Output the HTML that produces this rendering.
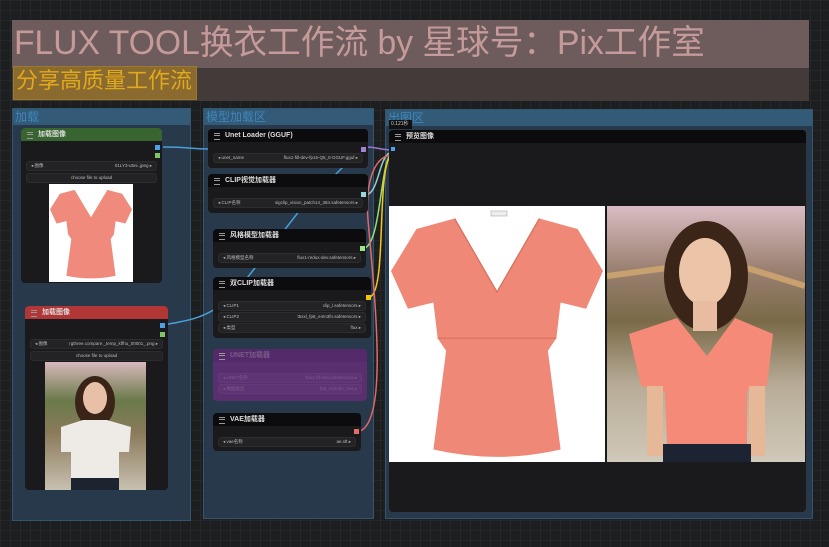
<!DOCTYPE html>
<html><head><meta charset="utf-8"><style>
*{margin:0;padding:0;box-sizing:border-box}
body{width:829px;height:547px;overflow:hidden;background:#1d1e20;font-family:"Liberation Sans","Noto Sans CJK SC",sans-serif;position:relative;
background-image:linear-gradient(#26272a 1px,transparent 1px),linear-gradient(90deg,#26272a 1px,transparent 1px);background-size:10px 10px}
.a{position:absolute}
.grp{position:absolute;background:#27394a;border:1px solid #33556e}
.grp .h{height:16px;background:#335a76;color:#3f87bd;font-size:12px;line-height:16px;padding-left:2px}
.node{position:absolute;background:#1a1a1c;border-radius:4px;overflow:hidden}
.node .t{height:13px;background:#0c0c0e;color:#ddd;font-size:7px;line-height:13px;padding-left:17px;position:relative;font-weight:bold}
.node .t:before{content:"";position:absolute;left:6px;top:4px;width:6px;height:5px;border-top:1px solid #999;border-bottom:1px solid #999}
.node .t:after{content:"";position:absolute;left:6px;top:6px;width:6px;height:1px;background:#999}
.w{position:absolute;height:10px;background:#232325;border:1px solid #2d2d30;border-radius:3px;font-size:4.5px;color:#bbb;line-height:8px;padding:0 4px}
.w span{float:right}
.dot{position:absolute;width:5px;height:5px}
</style></head><body>
<!-- title -->
<div class="a" style="left:12px;top:20px;width:797px;height:48px;background:#6e5c5c"></div>
<div class="a" style="left:12px;top:68px;width:797px;height:33px;background:#433a3a"></div>
<div class="a" style="left:14px;top:21px;font-size:34px;color:#c59a9a;line-height:44px;white-space:nowrap;transform:scaleX(0.99);transform-origin:left">FLUX TOOL换衣工作流 by 星球号：Pix工作室</div>
<div class="a" style="left:13px;top:66px;width:184px;height:34px;background:#8a6a2e;border:1px solid #9c7a2c"></div>
<div class="a" style="left:16px;top:66px;font-size:22px;color:#e0a91e;line-height:30px;white-space:nowrap">分享高质量工作流</div>

<!-- groups -->
<div class="grp" style="left:12px;top:108px;width:179px;height:413px"><div class="h">加载</div></div>
<div class="grp" style="left:203px;top:108px;width:171px;height:411px"><div class="h">模型加载区</div></div>
<div class="grp" style="left:385px;top:109px;width:428px;height:410px"><div class="h">出图区</div></div>

<!-- wires -->
<svg class="a" style="left:0;top:0" width="829" height="547">
<g fill="none" stroke-width="1.5">
<path d="M163,147 C190,147 190,149 208,149" stroke="#4a9fd8"/>
<path d="M163,325 C190,320 200,320 230,300 L300,210 L350,160" stroke="#4a9fd8"/>
<path d="M365,147 C378,147 380,150 393,150" stroke="#9a78d0"/>
<path d="M365,195 C380,195 378,152 393,152" stroke="#8fd0d0"/>
<path d="M365,248 C382,240 380,155 393,153" stroke="#8ee07a"/>
<path d="M370,297 C388,290 375,160 393,154" stroke="#f0c820"/>
<path d="M360,431 C388,420 375,300 368,220 C365,180 375,155 393,155" stroke="#e06a6a"/>
</g></svg>

<!-- load image 1 -->
<div class="node" style="left:21px;top:128px;width:141px;height:155px">
<div class="t" style="background:#37642f">加载图像</div>
<div class="w" style="left:5px;top:33px;width:131px">◂ 图像<span>01LY3-u5ni..jpeg ▸</span></div>
<div class="w" style="left:5px;top:45px;width:131px;text-align:center">choose file to upload</div>
<svg class="a" style="left:28px;top:56px" width="84" height="98"><rect width="84" height="98" fill="#fff"/><g transform="translate(1,2) scale(0.82,0.78)"><path d="M30,5 L50,40 L70,5 L88,10 L100,30 L92,48 L80,45 L78,62 L74,68 L80,115 Q50,122 20,115 L26,68 L22,62 L20,45 L8,48 L0,30 L12,10 Z" fill="#f08a7c"/></g></svg>
</div>
<div class="dot" style="left:155px;top:145px;background:#4aa3e8"></div>
<div class="dot" style="left:155px;top:153px;background:#7ec66a"></div>

<!-- load image 2 -->
<div class="node" style="left:25px;top:306px;width:143px;height:184px">
<div class="t" style="background:#b13636">加载图像</div>
<div class="w" style="left:5px;top:33px;width:133px">◂ 图像<span>rgthree.compare._temp_kffhu_00001_.png ▸</span></div>
<div class="w" style="left:5px;top:45px;width:133px;text-align:center">choose file to upload</div>
<svg class="a" style="left:20px;top:56px" width="101" height="128"><defs><linearGradient id="g1" x1="0" y1="0" x2="0" y2="1"><stop offset="0" stop-color="#d8b8bc"/><stop offset=".3" stop-color="#6a7a4a"/><stop offset=".55" stop-color="#8a7a5a"/><stop offset="1" stop-color="#c8c0b0"/></linearGradient></defs>
<rect width="101" height="128" fill="url(#g1)"/><ellipse cx="50" cy="40" rx="20" ry="26" fill="#3a2418"/><ellipse cx="50" cy="36" rx="12" ry="16" fill="#e8c0a8"/><path d="M16,65 L38,58 L62,58 L86,65 L84,90 L74,90 L74,118 L26,118 L26,90 L16,90 Z" fill="#eeeae6"/><rect x="26" y="116" width="48" height="12" fill="#1c2430"/></svg>
</div>
<div class="dot" style="left:160px;top:323px;background:#4aa3e8"></div>
<div class="dot" style="left:160px;top:332px;background:#7ec66a"></div>

<!-- model nodes -->
<div class="node" style="left:208px;top:129px;width:160px;height:39px"><div class="t">Unet Loader (GGUF)</div>
<div class="w" style="left:5px;top:24px;width:150px">◂ unet_name<span>flux1-fill-dev-fp16-Q5_0-GGUF.gguf ▸</span></div></div>
<div class="dot" style="left:361px;top:147px;background:#a080d8"></div>
<div class="node" style="left:208px;top:174px;width:160px;height:39px"><div class="t">CLIP视觉加载器</div>
<div class="w" style="left:5px;top:24px;width:150px">◂ CLIP名称<span>sigclip_vision_patch14_384.safetensors ▸</span></div></div>
<div class="dot" style="left:361px;top:192px;background:#9ad8d8"></div>
<div class="node" style="left:213px;top:229px;width:153px;height:39px"><div class="t">风格模型加载器</div>
<div class="w" style="left:5px;top:24px;width:143px">◂ 风格模型名称<span>flux1-redux-dev.safetensors ▸</span></div></div>
<div class="dot" style="left:360px;top:246px;background:#9ae884"></div>
<div class="node" style="left:213px;top:277px;width:158px;height:61px"><div class="t">双CLIP加载器</div>
<div class="w" style="left:5px;top:24px;width:148px">◂ CLIP1<span>clip_l.safetensors ▸</span></div>
<div class="w" style="left:5px;top:35px;width:148px">◂ CLIP2<span>t5xxl_fp8_e4m3fn.safetensors ▸</span></div>
<div class="w" style="left:5px;top:46px;width:148px">◂ 类型<span>flux ▸</span></div></div>
<div class="dot" style="left:366px;top:295px;background:#f0c800"></div>
<div class="node" style="left:213px;top:349px;width:154px;height:52px;background:#5a2f70"><div class="t" style="background:#552a6a;color:#7a5a8a">UNET加载器</div>
<div class="w" style="left:5px;top:24px;width:144px;background:#5e3474;border-color:#643a7a;color:#7c5c8c">◂ UNET名称<span>flux1-fill-dev.safetensors ▸</span></div>
<div class="w" style="left:5px;top:35px;width:144px;background:#5e3474;border-color:#643a7a;color:#7c5c8c">◂ 数据类型<span>fp8_e4m3fn_fast ▸</span></div></div>
<div class="node" style="left:213px;top:413px;width:148px;height:38px"><div class="t">VAE加载器</div>
<div class="w" style="left:5px;top:24px;width:138px">◂ vae名称<span>ae.sft ▸</span></div></div>
<div class="dot" style="left:354px;top:429px;background:#e86a6a"></div>

<!-- preview -->
<div class="a" style="left:389px;top:120px;width:23px;height:9px;background:#111;color:#ccc;font-size:5px;line-height:9px;padding-left:2px">0.121秒</div>
<div class="node" style="left:389px;top:130px;width:417px;height:382px"><div class="t">预览图像</div></div>
<div class="dot" style="left:391px;top:147px;background:#4aa3e8;width:4px;height:4px"></div>
<svg class="a" style="left:389px;top:206px" width="216" height="256"><rect width="216" height="256" fill="#fff"/><g transform="translate(2,2) scale(2.12,2.1)"><path d="M30,5 L50,40 L70,5 L88,10 L100,30 L92,48 L80,45 L78,62 L74,68 L80,115 Q50,122 20,115 L26,68 L22,62 L20,45 L8,48 L0,30 L12,10 Z" fill="#f08878"/><path d="M30,5 L50,40 L70,5" fill="none" stroke="#d87060" stroke-width=".6"/><path d="M22,62 L78,62" stroke="#d87060" stroke-width=".5"/></g><rect x="102" y="5" width="16" height="5" fill="#eee" stroke="#999" stroke-width=".5"/></svg>
<svg class="a" style="left:607px;top:206px" width="198" height="256"><defs><linearGradient id="g2" x1="0" y1="0" x2="0" y2="1"><stop offset="0" stop-color="#d9bcc2"/><stop offset=".25" stop-color="#9a8070"/><stop offset=".45" stop-color="#7a6a48"/><stop offset=".7" stop-color="#b8ac98"/><stop offset="1" stop-color="#d0c8b8"/></linearGradient></defs>
<rect width="198" height="256" fill="url(#g2)"/>
<path d="M0,70 L60,62 M140,62 L198,80" stroke="#c9a070" stroke-width="6"/>
<ellipse cx="99" cy="70" rx="42" ry="55" fill="#3b2418"/><ellipse cx="98" cy="66" rx="26" ry="34" fill="#ecc4a8"/>
<rect x="86" y="95" width="24" height="30" fill="#e8bca0"/>
<path d="M22,128 L70,112 L100,150 L128,112 L166,128 L160,180 L140,185 L140,240 L60,240 L58,185 L34,180 Z" fill="#f58a78"/>
<rect x="40" y="180" width="16" height="70" fill="#e6b898"/><rect x="142" y="180" width="16" height="70" fill="#e6b898"/>
<rect x="56" y="238" width="88" height="18" fill="#1c2434"/></svg>
</body></html>
